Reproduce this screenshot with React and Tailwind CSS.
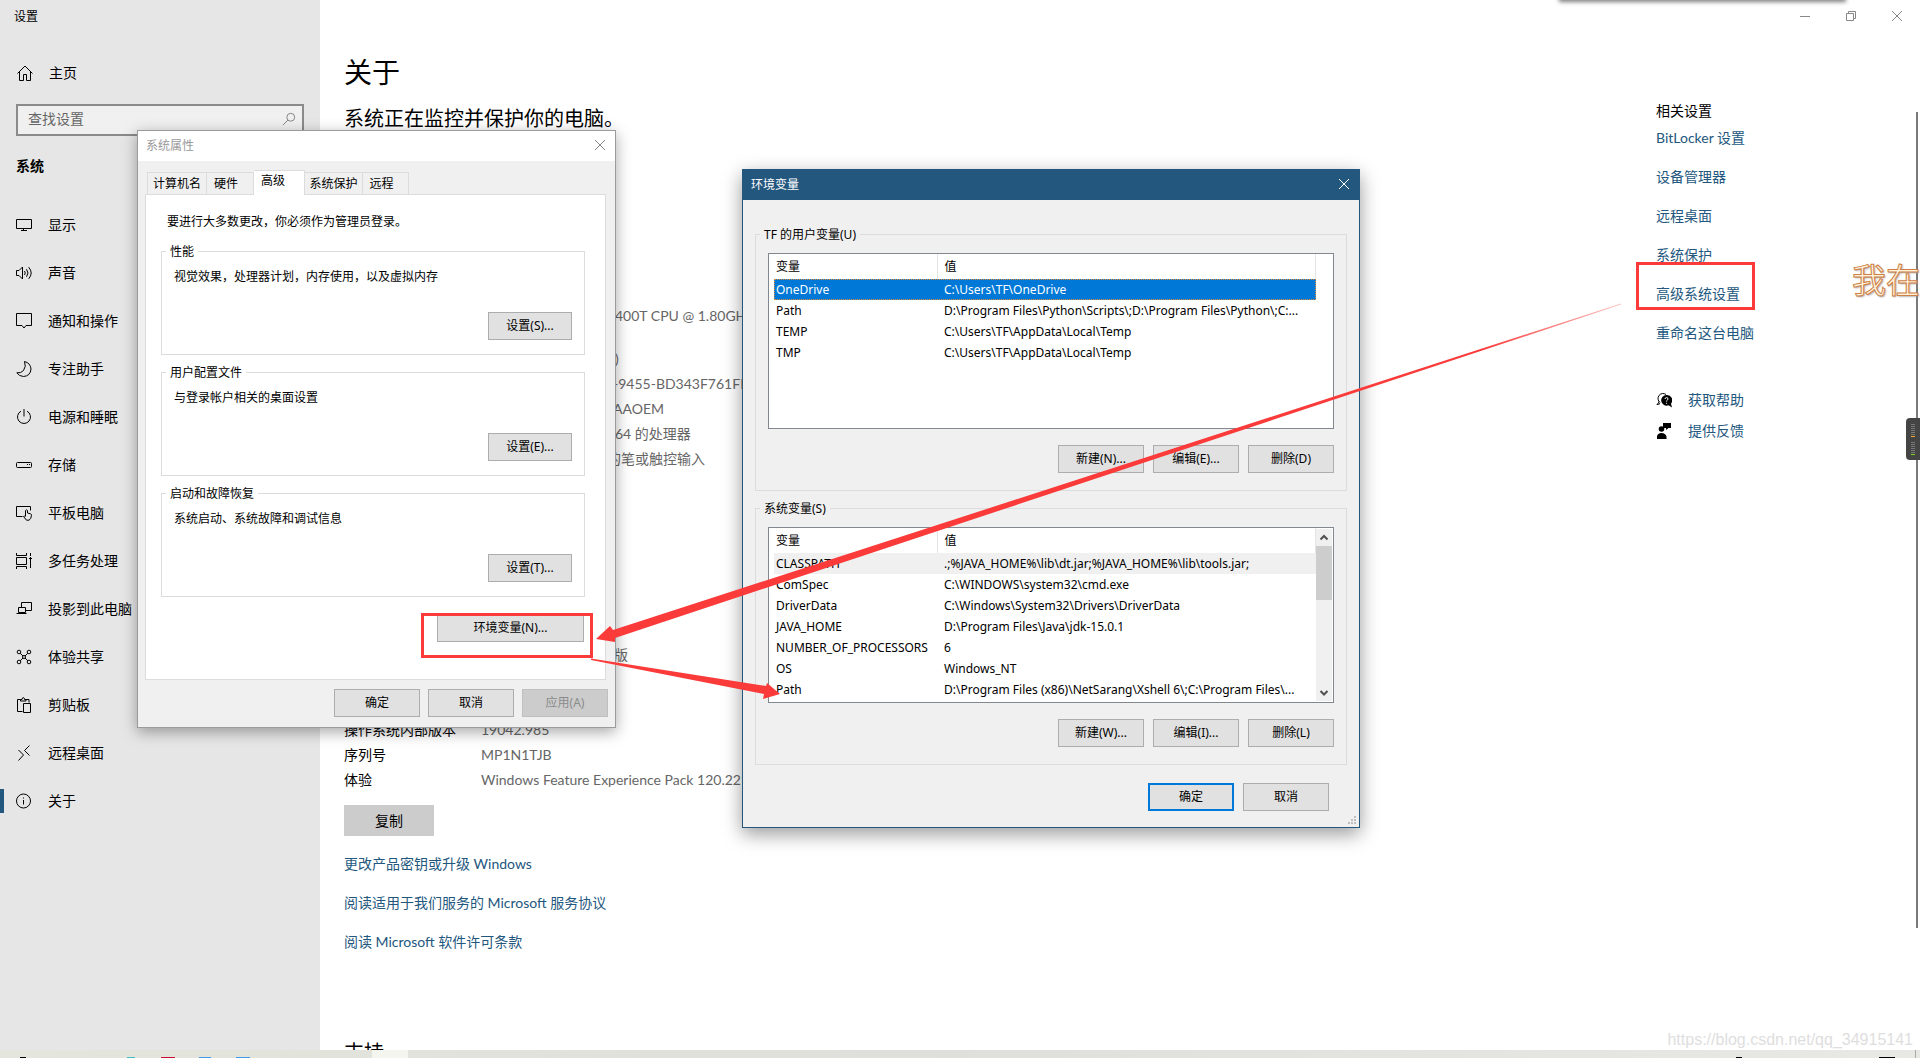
import React from 'react';

const Icon = ({ children, className = 'w-4 h-4' }) => (
  <svg viewBox="0 0 16 16" fill="none" stroke="currentColor" strokeWidth="1" className={`${className} shrink-0`} aria-hidden="true">
    {children}
  </svg>
);

const navItems = [
  { label: '显示', icon: <path d="M.5 2.500h15v9H.5zM7.500 11.500v2M5 13.500h6" /> },
  {
    label: '声音',
    icon: <path d="M.5 5.500h2.500l3.500-3.500v12l-3.500-3.500H.5zM8.500 6q1.500 2 0 4M10.500 4.200q3 3.800 0 7.600M12.700 2.200q5 5.800 0 11.600" />
  },
  { label: '通知和操作', icon: <path d="M.5.5h15v12H10l-2 2.500-2-2.500H.5z" /> },
  { label: '专注助手', icon: <path d="M8.500.5q6 1.500 6.500 7.500-.5 7-7.500 7.500Q3 15.300.8 11.800 5 12.500 7.500 9.500 10.500 5.500 8.500.5z" /> },
  { label: '电源和睡眠', icon: <path d="M8 0v7.500M5 2.200a6.500 6.500 0 1 0 6 0" /> },
  { label: '存储', icon: <path d="M1.500 5.500h13q1 0 1 1v3q0 1-1 1h-13q-1 0-1-1v-3q0-1 1-1zM11 7.500h1M13 7.500h1" /> },
  {
    label: '平板电脑',
    icon: <path d="M6.500 11.500h-6v-10h14v4M9.500 11V5.500q1-1.500 2 0V8l3 .8q1 .3 1 1.400-.2 4-2.500 5H10.500L7.500 11.500q.8-1.500 2 .5" />
  },
  { label: '多任务处理', icon: <path d="M.5 0v2.500h10V0M.5 16v-2.500h10V16M.5 4.500h10v7H.5zM14.500 0v3M14.500 7v8M13 5.500h3M14.500 4v3" /> },
  { label: '投影到此电脑', icon: <path d="M5.500 6.500v-5h10v8H9.500M2.500 6.500h7v5h-7zM.5 12.500h10" /> },
  {
    label: '体验共享',
    icon: (
      <>
        <circle cx="3" cy="3" r="1.800" />
        <circle cx="13" cy="3" r="1.800" />
        <circle cx="3" cy="13" r="1.800" />
        <circle cx="13" cy="13" r="1.800" />
        <circle cx="8" cy="8" r="1.500" />
        <path d="M4.200 4.200 7 7M11.800 4.200 9 7M4.200 11.800 7 9M11.800 11.800 9 9" />
      </>
    )
  },
  { label: '剪贴板', icon: <path d="M6.500 14.500h-5v-12h3M10 2.500h3v3M4.500 4V2.500h1.500q.2-2 1.300-2t1.200 2H10V4zM7.500 6.500h7v9h-7z" /> },
  { label: '远程桌面', icon: <path d="M2.500 5l5 5-5 5.500M13.500.5l-5 5 5 5" /> },
  {
    label: '关于',
    active: true,
    icon: (
      <>
        <circle cx="7.500" cy="8" r="7" />
        <path d="M7.500 7v4.500M7.500 4.500v1" />
      </>
    )
  }
];

const deviceSpecs = [
  { value: '400T CPU @ 1.80GHz', cell: 'h-[43px] pl-[134px]' },
  { value: ')', cell: 'h-[25px] pl-[134px]' },
  { value: '-9455-BD343F761FD1', cell: 'h-[25px] pl-[132px]' },
  { value: 'AAOEM', cell: 'h-[25px] pl-[132px]' },
  { value: '64 的处理器', cell: 'h-[25px] pl-[134px]' },
  { value: '的笔或触控输入', cell: 'h-[25px] pl-[126px]' }
];

const windowsSpecs = [
  { label: '', value: '版', cell: 'h-[75px] pl-[133px]' },
  { label: '操作系统内部版本', value: '19042.985', cell: 'h-[25px]' },
  { label: '序列号', value: 'MP1N1TJB', cell: 'h-[25px]' },
  { label: '体验', value: 'Windows Feature Experience Pack 120.2212', cell: 'h-[25px]' }
];

const aboutLinks = ['更改产品密钥或升级 Windows', '阅读适用于我们服务的 Microsoft 服务协议', '阅读 Microsoft 软件许可条款'];

const relatedLinks = ['BitLocker 设置', '设备管理器', '远程桌面', '系统保护', '高级系统设置', '重命名这台电脑'];

const userVars = [
  ['OneDrive', 'C:\\Users\\TF\\OneDrive'],
  ['Path', 'D:\\Program Files\\Python\\Scripts\\;D:\\Program Files\\Python\\;C:...'],
  ['TEMP', 'C:\\Users\\TF\\AppData\\Local\\Temp'],
  ['TMP', 'C:\\Users\\TF\\AppData\\Local\\Temp']
];

const systemVars = [
  ['CLASSPATH', '.;%JAVA_HOME%\\lib\\dt.jar;%JAVA_HOME%\\lib\\tools.jar;'],
  ['ComSpec', 'C:\\WINDOWS\\system32\\cmd.exe'],
  ['DriverData', 'C:\\Windows\\System32\\Drivers\\DriverData'],
  ['JAVA_HOME', 'D:\\Program Files\\Java\\jdk-15.0.1'],
  ['NUMBER_OF_PROCESSORS', '6'],
  ['OS', 'Windows_NT'],
  ['Path', 'D:\\Program Files (x86)\\NetSarang\\Xshell 6\\;C:\\Program Files\\...']
];

const DialogButton = ({ children, className = 'w-[86px]', ...rest }) => (
  <button
    type="button"
    className={`h-7 shrink-0 border border-[#adadad] bg-[#e1e1e1] text-black disabled:border-[#bfbfbf] disabled:bg-[#cccccc] disabled:text-[#8b8b8b] ${className}`}
    {...rest}
  >
    {children}
  </button>
);

const SettingsGroup = ({ title, text, button }) => (
  <fieldset className="h-[113px] border border-[#dcdcdc] pr-3">
    <legend className="ml-1 px-1 pt-[2px] leading-4">{title}</legend>
    <div className="flex flex-col pl-3 pt-[9px]">
      <p className="leading-4">{text}</p>
      <DialogButton className="w-[84px] self-end mt-[27px]">{button}</DialogButton>
    </div>
  </fieldset>
);

const VariableTable = ({ rows, selected, scroll }) => (
  <div className="flex h-44 justify-between border border-[#828790] bg-white pl-[5px] pr-px">
    <table className="w-[542px] table-fixed self-start border-collapse text-left">
      <thead>
        <tr className="h-[25px]">
          <th className="w-[163px] border-r border-[#e5e5e5] pl-[2px] font-normal">变量</th>
          <th className="border-r border-[#e5e5e5] pl-[7px] font-normal">值</th>
        </tr>
      </thead>
      <tbody>
        {rows.map(([name, value], index) => (
          <tr
            key={name}
            className={`h-[21px] leading-4 ${
              selected && index === 0 ? 'bg-[#0078d7] text-white outline outline-dotted outline-[#e08a3c] -outline-offset-1' : ''
            } ${!selected && index === 0 ? 'bg-[#f0f0f0]' : ''}`}
          >
            <td className="whitespace-nowrap pl-[2px]">{name}</td>
            <td className="whitespace-nowrap pl-[7px]">{value}</td>
          </tr>
        ))}
      </tbody>
    </table>
    {scroll && (
      <div className="my-px flex w-4 flex-col items-center bg-[#f0f0f0]">
        <Icon className="h-[17px] w-4 text-[#505050]">
          <path d="M4.500 10 8 6.500 11.500 10" strokeWidth="2" />
        </Icon>
        <div className="h-[54px] w-full bg-[#cdcdcd]" />
        <Icon className="mt-auto h-[17px] w-4 text-[#505050]">
          <path d="M4.500 6.500 8 10l3.500-3.500" strokeWidth="2" />
        </Icon>
      </div>
    )}
  </div>
);

const VariableGroup = ({ title, buttons, ...table }) => (
  <fieldset className="h-[266px] border border-[#dcdcdc] px-3">
    <legend className="-ml-2 px-1 pt-[2px] leading-4">{title}</legend>
    <div className="pt-[10px]">
      <VariableTable {...table} />
      <div className="mt-4 flex justify-end gap-[9px]">
        {buttons.map((label) => (
          <DialogButton key={label}>{label}</DialogButton>
        ))}
      </div>
    </div>
  </fieldset>
);

const SystemProperties = () => (
  <section
    aria-label="系统属性"
    className="absolute left-[137px] top-[130px] w-[479px] border border-[#9b9b9b] bg-[#f0f0f0] font-['Noto_Sans','Noto_Sans_CJK_SC',sans-serif] text-xs shadow-[0_4px_14px_rgba(0,0,0,0.35)]"
  >
    <header className="flex h-[30px] items-center justify-between bg-white pl-2 pr-[7px] text-[#999999]">
      <h2>系统属性</h2>
      <button type="button" aria-label="关闭" className="pb-[2px] text-[#888888]">
        <Icon>
          <path d="M3 3l10 10M13 3 3 13" />
        </Icon>
      </button>
    </header>

    <div className="flex flex-col pt-[9px] pl-[7px] pr-[9px]">
      <div role="tablist" className="relative z-10 -mb-px flex items-end pl-[2px]">
        <button type="button" role="tab" className="h-[23px] w-[60px] border border-[#dcdcdc]">计算机名</button>
        <button type="button" role="tab" className="h-[23px] w-[47px] border border-l-0 border-[#dcdcdc] pr-2">硬件</button>
        <button type="button" role="tab" aria-selected="true" className="h-[25px] w-[51px] border border-b-0 border-l-0 border-[#dcdcdc] bg-white pb-1 pr-3">
          高级
        </button>
        <button type="button" role="tab" className="h-[23px] w-[58px] border border-l-0 border-[#dcdcdc]">系统保护</button>
        <button type="button" role="tab" className="h-[23px] w-[46px] border border-l-0 border-[#dcdcdc] pr-2">远程</button>
      </div>

      <div className="flex h-[486px] flex-col border border-[#dcdcdc] bg-white pl-[15px] pr-[20px] pt-[19px]">
        <p className="pl-[6px] leading-4">要进行大多数更改，你必须作为管理员登录。</p>
        <div className="mt-3 flex flex-col gap-2">
          <SettingsGroup title="性能" text="视觉效果，处理器计划，内存使用，以及虚拟内存" button="设置(S)..." />
          <SettingsGroup title="用户配置文件" text="与登录帐户相关的桌面设置" button="设置(E)..." />
          <SettingsGroup title="启动和故障恢复" text="系统启动、系统故障和调试信息" button="设置(T)..." />
        </div>
        <DialogButton className="mr-px mt-[17px] w-[147px] self-end">环境变量(N)...</DialogButton>
      </div>

      <div className="-mr-[2px] flex justify-end gap-2 pb-[10px] pt-[9px]">
        <DialogButton>确定</DialogButton>
        <DialogButton>取消</DialogButton>
        <DialogButton disabled>应用(A)</DialogButton>
      </div>
    </div>
  </section>
);

const EnvironmentVariables = () => (
  <section
    aria-label="环境变量"
    className="absolute left-[742px] top-[169px] w-[618px] border border-[#23577e] bg-[#f0f0f0] font-['Noto_Sans','Noto_Sans_CJK_SC',sans-serif] text-xs shadow-[0_6px_18px_rgba(0,0,0,0.4)]"
  >
    <header className="flex h-[30px] items-center justify-between bg-[#23577e] pl-2 pr-[7px] text-white">
      <h2>环境变量</h2>
      <button type="button" aria-label="关闭" className="pb-[2px]">
        <Icon>
          <path d="M3 3l10 10M13 3 3 13" />
        </Icon>
      </button>
    </header>

    <div className="flex flex-col gap-2 px-3 pt-[25px]">
      <VariableGroup title="TF 的用户变量(U)" rows={userVars} selected buttons={['新建(N)...', '编辑(E)...', '删除(D)']} />
      <VariableGroup title="系统变量(S)" rows={systemVars} scroll buttons={['新建(W)...', '编辑(I)...', '删除(L)']} />
    </div>

    <div className="flex justify-end gap-[9px] pb-4 pr-[30px] pt-[18px]">
      <button type="button" className="h-7 w-[86px] border-2 border-[#0078d7] bg-[#e1e1e1]">确定</button>
      <DialogButton>取消</DialogButton>
    </div>
    <svg className="absolute bottom-[3px] right-[3px] h-2 w-2" viewBox="0 0 8 8" fill="#bfbfbf" aria-hidden="true">
      <path d="M6 0h2v2H6zM3 3h2v2H3zM6 3h2v2H6zM0 6h2v2H0zM3 6h2v2H3zM6 6h2v2H6z" />
    </svg>
  </section>
);

const Sidebar = () => (
  <aside className="w-80 shrink-0 bg-[#e6e6e6]">
    <p className="pl-[14px] pt-[9px] text-xs leading-4">设置</p>
    <a href="#home" className="mt-9 flex h-6 items-center gap-4 pl-[17px]">
      <Icon>
        <path d="M.5 8.500 8 1l7.500 7.500M2.500 7v8.500h4v-6h3v6h4V7" />
      </Icon>
      主页
    </a>
    <div className="mx-4 mt-[19px] flex h-8 items-center border-2 border-[#8a8a8a] bg-[#f0f0f0] pb-[2px] pl-[10px] pr-[6px]">
      <input type="text" aria-label="查找设置" placeholder="查找设置" className="min-w-0 flex-1 bg-transparent outline-none placeholder:text-[#666666]" />
      <Icon className="h-[14px] w-[14px] text-[#777777]">
        <circle cx="10" cy="6" r="4.500" />
        <path d="M6.800 9.200 1 15" />
      </Icon>
    </div>
    <h2 className="mt-[18px] pl-4 font-bold leading-6">系统</h2>
    <nav className="mt-[23px]">
      {navItems.map((item) => (
        <a key={item.label} href="#section" className="relative flex h-12 items-center gap-4 pl-4">
          {item.active && <span className="absolute left-0 h-6 w-1 bg-[#23577e]" />}
          <Icon>{item.icon}</Icon>
          {item.label}
        </a>
      ))}
    </nav>
  </aside>
);

const AboutPage = () => (
  <main className="min-w-0 flex-1 pl-6 pt-[52px]">
    <h1 className="text-[28px] leading-10">关于</h1>
    <p className="mt-3 text-xl leading-7">系统正在监控并保护你的电脑。</p>

    <table className="mt-[172px] leading-[18px]">
      <tbody>
        {deviceSpecs.map((spec) => (
          <tr key={spec.value} className="align-top">
            <th className="w-[137px]" />
            <td className={`whitespace-nowrap pt-[3px] text-[#666666] ${spec.cell}`}>{spec.value}</td>
          </tr>
        ))}
      </tbody>
    </table>

    <table className="mt-[171px] leading-[18px]">
      <tbody>
        {windowsSpecs.map((spec) => (
          <tr key={spec.value} className="align-top">
            <th className="w-[137px] whitespace-nowrap pt-[3px] text-left font-normal">{spec.label}</th>
            <td className={`whitespace-nowrap pt-[3px] text-[#666666] ${spec.cell}`}>{spec.value}</td>
          </tr>
        ))}
      </tbody>
    </table>

    <button type="button" className="mt-3 h-[31px] w-[90px] bg-[#cccccc]">复制</button>
    <div className="mt-[18px] flex flex-col items-start gap-[19px] leading-5 text-[#23577e]">
      {aboutLinks.map((label) => (
        <a key={label} href="#about">{label}</a>
      ))}
    </div>
    <h2 className="mt-[86px] text-xl leading-7">支持</h2>
  </main>
);

const RelatedSettings = () => (
  <aside className="w-[264px] shrink-0">
    <div className="flex h-8 items-center justify-end gap-[30px] pr-[15px] text-[#888888]">
      <button type="button" aria-label="最小化">
        <Icon><path d="M3 8.500h10" /></Icon>
      </button>
      <button type="button" aria-label="还原">
        <Icon><path d="M3.500 5.500h7v7h-7zM5.500 5.500v-2h7v7h-2" /></Icon>
      </button>
      <button type="button" aria-label="关闭">
        <Icon><path d="M3 3l10 10M13 3 3 13" /></Icon>
      </button>
    </div>
    <h2 className="mt-[69px] leading-5">相关设置</h2>
    <div className="mt-[7px] flex flex-col items-start gap-[19px] leading-5 text-[#23577e]">
      {relatedLinks.map((label) => (
        <a key={label} href="#related">{label}</a>
      ))}
    </div>
    <div className="mt-[47px] flex flex-col gap-[11px] leading-5 text-[#23577e]">
      <a href="#help" className="flex items-center gap-4">
        <Icon className="h-4 w-4 text-black">
          <path d="M4 10.500A5 5 0 1 1 10 2.500M3 9.500q0 1.500-2 3 2 0 3-1" />
          <path d="M10.500 3a5.300 5.300 0 1 0 2 10.200L16 15.500l-1-3.800A5.300 5.300 0 0 0 10.500 3z" fill="currentColor" stroke="none" />
          <path d="M9 7q.2-1.500 1.600-1.500T12 7q0 .8-1.400 1.800v.7M10.600 10.800v1" stroke="white" />
        </Icon>
        获取帮助
      </a>
      <a href="#feedback" className="flex items-center gap-4">
        <Icon className="h-4 w-4 text-black">
          <path d="M7 0h8v5h-2.500L10 7V5H7zM1 16v-2.500Q1.500 10 5.500 10t5 3.500V16z" fill="currentColor" stroke="none" />
          <circle cx="5.500" cy="6" r="2.800" fill="currentColor" stroke="none" />
        </Icon>
        提供反馈
      </a>
    </div>
  </aside>
);

// red boxes and arrows drawn over the windows
const Annotations = () => (
  <svg className="pointer-events-none absolute left-0 top-0 h-[1058px] w-[1920px]" viewBox="0 0 1920 1058" aria-hidden="true">
    <defs>
      <linearGradient id="fade" gradientUnits="userSpaceOnUse" x1="1621" y1="304" x2="1480" y2="350">
        <stop offset="0" stopColor="#fb3a3a" stopOpacity="0.3" />
        <stop offset="1" stopColor="#fb3a3a" />
      </linearGradient>
    </defs>
    <rect x="1637.500" y="263.500" width="116" height="45" fill="none" stroke="#fb3a3a" strokeWidth="3" />
    <rect x="422.500" y="614.500" width="169" height="42" fill="none" stroke="#fb3a3a" strokeWidth="3" />
    <path d="M596 639 610 626 613 630 1621 303.500 1621 304.500 615 638 615 642z" fill="url(#fade)" />
    <path d="M591 658.500 766 686 767 683 780 694 763 699 764 694 591 660z" fill="#fb3a3a" />
  </svg>
);

const Taskbar = () => (
  <footer className="flex h-2 shrink-0 items-end bg-gradient-to-r from-[#e4e5dc] via-[#dfdfdb] to-[#e8e9e4]">
    <span className="ml-5 h-px w-[6px] bg-black" />
    <span className="ml-[101px] h-px w-2 bg-[#3fc1c0]" />
    <span className="ml-[26px] h-px w-[14px] bg-[#c8102e]" />
    <span className="ml-6 h-px w-[12px] bg-[#3f9ae8]" />
    <span className="ml-[25px] h-px w-[14px] bg-[#3f9ae8]" />
    <span className="ml-[122px] h-2 w-9 bg-[#f5f5f0]" />
    <span className="ml-auto h-px w-[6px] bg-black" />
    <span className="ml-[137px] h-px w-4 bg-black" />
    <span className="ml-5 mr-1 h-2 w-px bg-[#a8a8a4]" />
  </footer>
);

const App = () => {
  return (
    <div className="relative flex h-screen flex-col overflow-hidden bg-white font-['Lato','Noto_Sans_CJK_SC',sans-serif] text-sm text-black">
      <div className="flex min-h-0 flex-1 overflow-hidden">
        <Sidebar />
        <AboutPage />
        <RelatedSettings />
      </div>
      <Taskbar />

      {/* Page scrollbar and screen-edge widgets */}
      <div className="absolute right-[2px] top-28 h-[816px] w-[2px] bg-[#7a7a7a]" />
      <div className="absolute -top-2 right-[75px] h-2 w-[285px] bg-white shadow-[0_1px_4px_1px_rgba(0,0,0,0.5)]" />
      <div className="absolute right-0 top-[260px] whitespace-nowrap text-[34px] leading-10 text-[#fff3dc] [-webkit-text-stroke:1px_#cf7f45] [text-shadow:1px_1px_2px_#999999]">
        我在
      </div>
      <div className="absolute right-0 top-[418px] flex h-[42px] w-[14px] flex-col items-center justify-center gap-[5px] rounded-l-sm bg-[#444444]">
        <div className="h-[13px] w-1 border-b border-[#f5a623] bg-[repeating-linear-gradient(#777777_0_1px,transparent_1px_2px)]" />
        <div className="h-[13px] w-1 border-b border-[#7ed321] bg-[repeating-linear-gradient(#777777_0_1px,transparent_1px_2px)]" />
      </div>

      <SystemProperties />
      <EnvironmentVariables />
      <Annotations />

      <p className="absolute bottom-2 right-[7px] font-['Liberation_Sans',sans-serif] text-base leading-5 text-[#dedede]">
        https://blog.csdn.net/qq_34915141
      </p>
    </div>
  );
};

export default App;
